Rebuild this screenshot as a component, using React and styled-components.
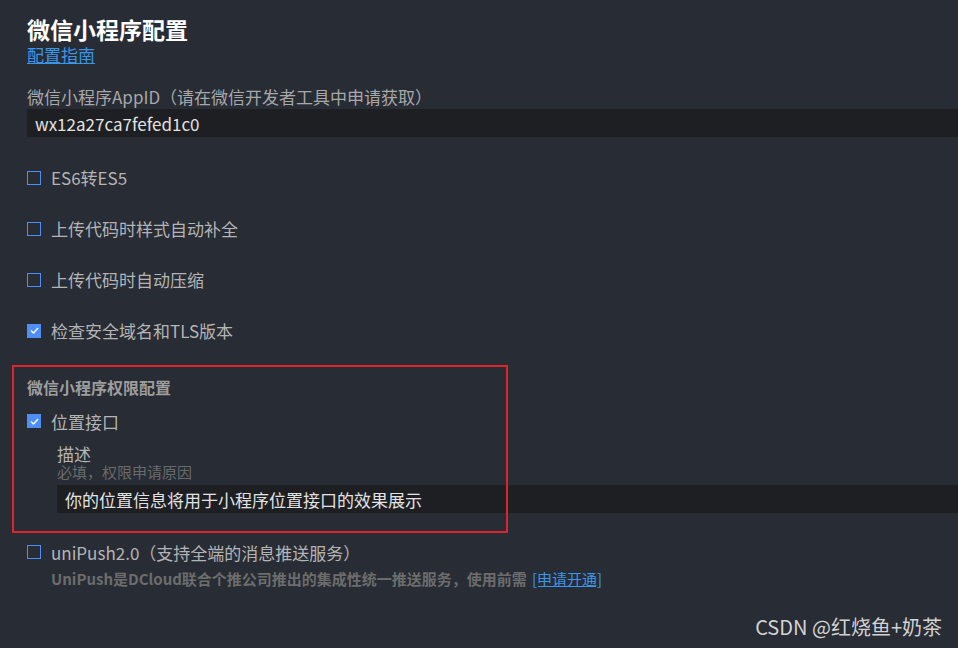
import styled, { createGlobalStyle } from "styled-components";

const GlobalStyle = createGlobalStyle`
  html, body {
    margin: 0;
    padding: 0;
    background: #282c35;
  }
  body {
    font-family: "Noto Sans CJK SC", "Open Sans", sans-serif;
    overflow: hidden;
  }
`;

const Page = styled.div`
  position: relative;
  width: 958px;
  height: 648px;
  padding-left: 27px;
  box-sizing: border-box;
  display: flex;
  flex-direction: column;
  background: #282c35;
  color: #b4b4b4;
`;

const Title = styled.h1`
  margin: 15px 0 0;
  font-size: 23px;
  line-height: 29px;
  font-weight: 700;
  color: #ffffff;
`;

const Link = styled.a`
  align-self: flex-start;
  margin-top: 1px;
  font-size: 17px;
  line-height: 20px;
  color: #3a96e8;
  text-decoration: underline;
  cursor: pointer;
`;

const Label = styled.div`
  margin-top: ${p => p.$mt || 0}px;
  font-size: ${p => p.$size || 17}px;
  line-height: ${p => p.$lh || 22}px;
  color: ${p => p.$color || "#a8a8a8"};
  padding-left: ${p => p.$indent || 0}px;
`;

const Input = styled.input`
  display: block;
  box-sizing: border-box;
  width: calc(100% - ${p => p.$indent || 0}px);
  margin: ${p => p.$mt || 0}px 0 0 ${p => p.$indent || 0}px;
  height: 28px;
  padding: 0 8px;
  border: none;
  outline: none;
  background: #1e1f23;
  color: #e2e2e2;
  font-family: "Noto Sans CJK SC", "Open Sans", sans-serif;
  font-size: 17px;
`;

const CheckList = styled.div`
  margin-top: 15px;
  display: flex;
  flex-direction: column;
`;

const CheckRow = styled.label`
  display: flex;
  align-items: center;
  gap: 10px;
  height: ${p => p.$h || 51}px;
  margin-top: ${p => p.$mt || 0}px;
  font-size: 17px;
  color: #b4b4b4;
`;

const Box = styled.span`
  flex: none;
  width: 14px;
  height: 14px;
  box-sizing: border-box;
  border: 1.5px solid #4d8ff4;
  background: ${p => (p.$checked ? "#4d8ff4" : "transparent")};
  display: flex;
  align-items: center;
  justify-content: center;
`;

const Section = styled.section`
  position: relative;
  padding-top: 19px;
  display: flex;
  flex-direction: column;
`;

const SectionTitle = styled.div`
  font-size: 16px;
  line-height: 24px;
  font-weight: 700;
  color: #9d9d9d;
`;

const Highlight = styled.div`
  position: absolute;
  left: -15px;
  top: 9px;
  width: 496px;
  height: 168px;
  box-sizing: border-box;
  border: 2px solid #e0242b;
  pointer-events: none;
`;

const Hint = styled.div`
  padding-left: 30px;
  font-size: 15px;
  line-height: 17px;
  color: #6a6a6a;
`;

const Note = styled.div`
  margin-top: 4px;
  padding-left: 24px;
  font-size: 15px;
  line-height: 20px;
  font-weight: 700;
  color: #6c6c6c;
`;

const NoteLink = styled.a`
  margin-left: 5px;
  font-weight: 400;
  color: #3a96e8;
  text-decoration: underline;
`;

const Watermark = styled.div`
  position: absolute;
  right: 16px;
  bottom: 9px;
  font-size: 20px;
  line-height: 24px;
  color: #d2d2d2;
`;

function Check({ checked, label, h, mt }) {
  return (
    <CheckRow $h={h} $mt={mt}>
      <Box $checked={checked}>
        {checked && (
          <svg width="9" height="7" viewBox="0 0 9 7">
            <path d="M1 3.5 L3.5 6 L8 1" fill="none" stroke="#fff" strokeWidth="1.4" />
          </svg>
        )}
      </Box>
      <span>{label}</span>
    </CheckRow>
  );
}

export default function App() {
  return (
    <>
      <GlobalStyle />
      <Page>
        <Title>微信小程序配置</Title>
        <Link>配置指南</Link>
        <Label $mt={21}>微信小程序AppID（请在微信开发者工具中申请获取）</Label>
        <Input $mt={1} defaultValue="wx12a27ca7fefed1c0" />
        <CheckList>
          <Check label="ES6转ES5" />
          <Check label="上传代码时样式自动补全" />
          <Check label="上传代码时自动压缩" />
          <Check checked label="检查安全域名和TLS版本" />
        </CheckList>
        <Section>
          <Highlight />
          <SectionTitle>微信小程序权限配置</SectionTitle>
          <Check checked label="位置接口" h={26} mt={9} />
          <Label $mt={10} $lh={19} $indent={30} $color="#b4b4b4">描述</Label>
          <Hint>必填，权限申请原因</Hint>
          <Input $mt={5} $indent={30} defaultValue="你的位置信息将用于小程序位置接口的效果展示" />
        </Section>
        <Check label="uniPush2.0（支持全端的消息推送服务）" h={26} mt={26} />
        <Note>
          UniPush是DCloud联合个推公司推出的集成性统一推送服务，使用前需
          <NoteLink>[申请开通]</NoteLink>
        </Note>
        <Watermark>CSDN @红烧鱼+奶茶</Watermark>
      </Page>
    </>
  );
}
